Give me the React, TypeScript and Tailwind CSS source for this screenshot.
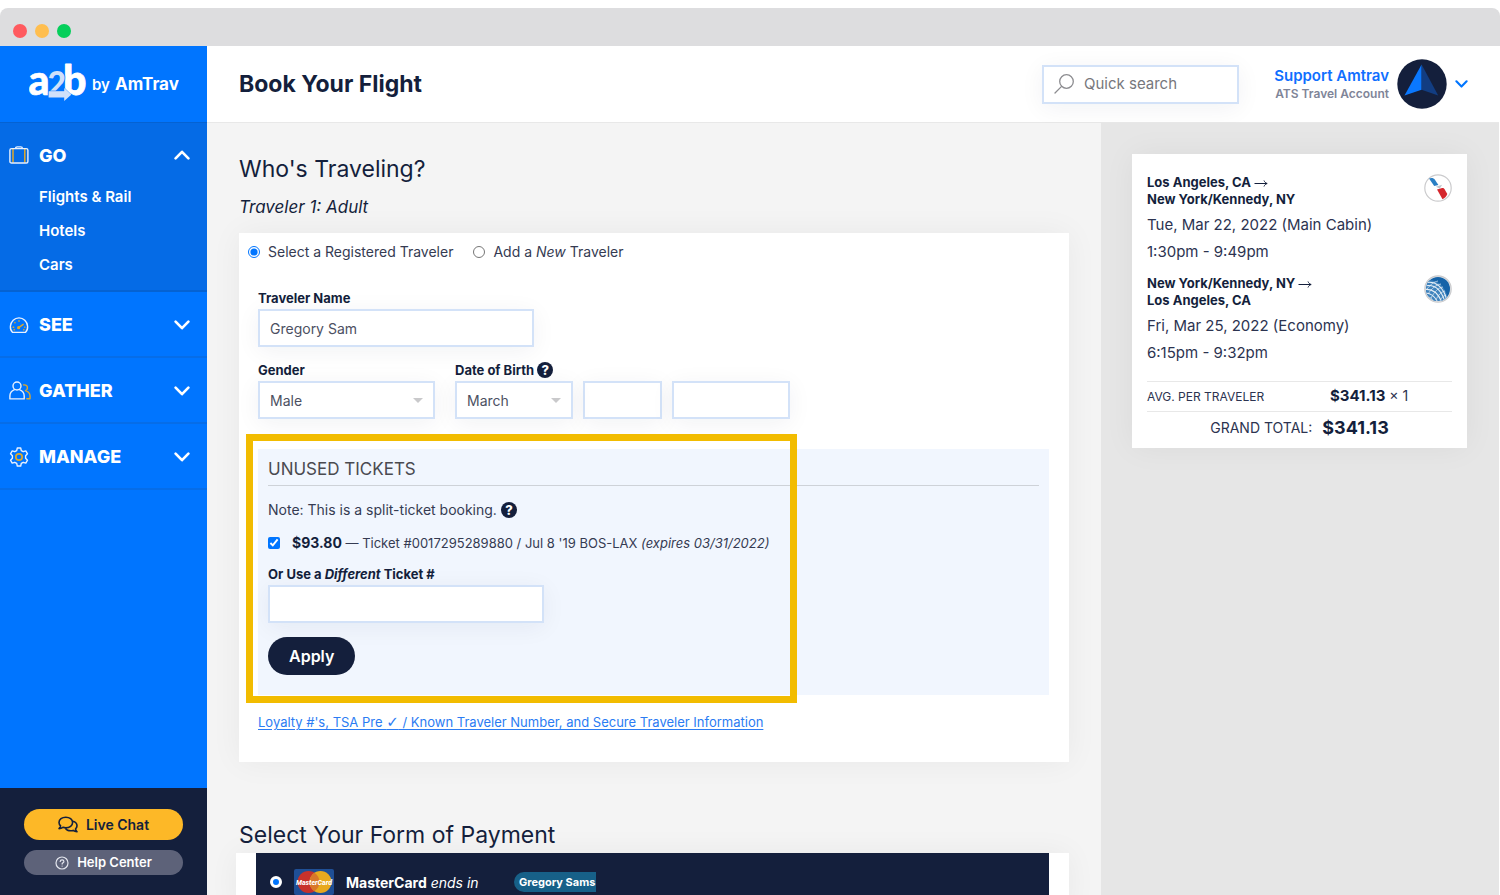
import React from "react";

const fieldClass =
  "h-[38px] w-full border-2 border-[#d3e2f8] bg-white px-[10px] text-[14px] text-[#4c5062] shadow-[0_4px_24px_rgba(20,31,60,0.06)] outline-none focus:border-[#0075ff]";
const labelClass = "text-[13px] leading-5 font-bold text-[#141f3c]";

function Chevron({ up = false, className = "" }: { up?: boolean; className?: string }) {
  return (
    <svg viewBox="0 0 16 10" className={className} fill="none" stroke="currentColor" strokeWidth="2.6" strokeLinecap="round" strokeLinejoin="round" aria-hidden="true">
      <path d={up ? "M1.6 8.4 8 1.8l6.4 6.6" : "M1.6 1.6 8 8.2l6.4-6.6"} />
    </svg>
  );
}

function Brand() {
  return (
    <a href="#home" className="flex h-[76px] items-center pl-[29px] text-white" aria-label="a2b by AmTrav">
      <svg viewBox="0 0 150 60" className="h-[60px] w-[150px]" fill="#fff" aria-hidden="true">
        <g fontFamily="Lato, sans-serif" fontWeight="900" strokeLinejoin="round">
          <text x="-0.500" y="41" fontSize="41" stroke="#fff" strokeWidth="0.600">a</text>
          <text x="34" y="41" fontSize="41" stroke="#fff" strokeWidth="0.800">b</text>
          <text x="18.500" y="41" fontSize="32" fill="#cfe0fa" stroke="#0075ff" strokeWidth="1.400" paintOrder="stroke">2</text>
        </g>
        <path d="M19.600 37.200h15.600v-3.200l7 6.800-7 6.200v-3.600H19.600z" fill="#cfe0fa" stroke="#0075ff" strokeWidth="1" paintOrder="stroke" />
        <g fontFamily="Inter, sans-serif">
          <text x="63" y="36" fontSize="15" fontWeight="600">by</text>
          <text x="86" y="36" fontSize="17" fontWeight="700">AmTrav</text>
        </g>
      </svg>
    </a>
  );
}

const gold = "#e0a92a";

function SuitcaseIcon() {
  return (
    <svg viewBox="0 0 20 18" className="h-[18px] w-5" fill="none" stroke="#e8f1ff" strokeWidth="1.400" aria-hidden="true">
      <path d="M4 3v13.500M15.800 3v13.500" stroke={gold} strokeWidth="1.500" />
      <rect x="0.900" y="2.600" width="18" height="14.400" rx="1.600" />
      <path d="M6.600 2.600c0-1.200.6-1.700 1.600-1.700h3.600c1 0 1.600.5 1.600 1.700" />
    </svg>
  );
}

function GaugeIcon() {
  return (
    <svg viewBox="0 0 20 18" className="h-[18px] w-5" fill="none" stroke="#e8f1ff" strokeWidth="1.400" strokeLinejoin="round" aria-hidden="true">
      <path d="M3.600 16.400C2 14.900 1.200 12.600 1.400 10.200 1.800 5.400 5.600 1.900 10 1.900s8.200 3.500 8.600 8.300c.2 2.400-.6 4.700-2.200 6.200z" />
      <path d="M10 4.200v1.600M5.500 6.300l.9.900M3.600 11.200h1.600M4.600 14l1.200-.5M15.400 14l-1.200-.5M16.400 11.200h-1.200M9.600 11.600l5-3.400" stroke={gold} />
      <circle cx="9.600" cy="11.700" r="1.600" fill={gold} stroke="none" />
    </svg>
  );
}

function PeopleIcon() {
  return (
    <svg viewBox="0 0 22 19" className="h-[19px] w-[22px]" fill="none" stroke="#e8f1ff" strokeWidth="1.400" strokeLinecap="round" strokeLinejoin="round" aria-hidden="true">
      <path d="M14.600 3.900c2.400-.4 4 1 3.800 3.200-.1 1.200-.8 2-1.800 2.500 2.600.9 4.200 2.500 4.400 5.200v3h-3.200" stroke={gold} />
      <circle cx="8" cy="5" r="4" />
      <path d="M5.500 8.700C2.600 9.800.9 12 .9 15v2.900h14.300V15c0-3-1.800-5.200-4.700-6.300" />
    </svg>
  );
}

function GearIcon() {
  return (
    <svg viewBox="0 0 20 20" className="h-5 w-5" fill="none" stroke="#e8f1ff" strokeWidth="1.400" strokeLinejoin="round" aria-hidden="true">
      <path d="M8.300 1h3.400l.6 2.600 1.900 1.100 2.600-.8 1.700 2.900-1.900 1.900v2.600l1.900 1.900-1.700 2.900-2.600-.8-1.900 1.100-.6 2.600H8.300l-.6-2.600-1.900-1.100-2.600.8-1.700-2.900 1.900-1.900V8.700L1.500 6.800l1.700-2.900 2.600.8 1.900-1.100z" />
      <circle cx="10" cy="10" r="3.200" stroke={gold} strokeWidth="1.700" />
    </svg>
  );
}

function HelpDot({ label }: { label: string }) {
  return (
    <button type="button" aria-label={label} className="flex h-4 w-4 items-center justify-center rounded-full bg-[#141f3c] text-[13px] leading-4 font-extrabold text-white">
      ?
    </button>
  );
}

function SelectField({ id, value, options }: { id: string; value: string; options: string[] }) {
  return (
    <div className="relative">
      <select id={id} defaultValue={value} className={`${fieldClass} appearance-none`}>
        {options.map((o) => (
          <option key={o}>{o}</option>
        ))}
      </select>
      <svg viewBox="0 0 10 5" className="pointer-events-none absolute top-[17px] right-3 h-[5px] w-[10px]" fill="#c9c9cb" aria-hidden="true">
        <path d="M0 0h10L5 5z" />
      </svg>
    </div>
  );
}

function NavItem({ icon, label }: { icon: React.ReactNode; label: string }) {
  return (
    <button type="button" className="flex h-[66px] w-full items-center border-b-2 border-[#066de8] pt-px pr-[17px] pl-[9px] text-left text-white">
      <span className="flex w-[30px] items-center">{icon}</span>
      <span className="flex-1 text-[18px] font-extrabold">{label}</span>
      <Chevron className="h-[10px] w-4" />
    </button>
  );
}

function Sidebar() {
  return (
    <aside className="flex w-[207px] shrink-0 flex-col bg-[#0075ff]">
      <Brand />
      <nav className="flex-1">
        <div className="h-[170px] border-b-2 border-t border-[#0562d2] bg-[#056be6] pt-[14px] text-white">
          <button type="button" className="flex h-9 w-full items-center pr-[17px] pl-[9px] text-left">
            <span className="w-[30px]"><SuitcaseIcon /></span>
            <span className="flex-1 text-[18px] font-extrabold">GO</span>
            <Chevron up className="h-[10px] w-4" />
          </button>
          <ul className="mt-[14px] flex flex-col gap-[14px] pl-[39px] text-[15px] leading-5 font-semibold">
            <li><a href="#flights">Flights &amp; Rail</a></li>
            <li><a href="#hotels">Hotels</a></li>
            <li><a href="#cars">Cars</a></li>
          </ul>
        </div>
        <NavItem icon={<GaugeIcon />} label="SEE" />
        <NavItem icon={<PeopleIcon />} label="GATHER" />
        <NavItem icon={<GearIcon />} label="MANAGE" />
      </nav>
      <div className="flex h-[107px] flex-col gap-[10px] bg-[#141f3c] px-6 pt-[21px]">
        <button type="button" className="flex h-[31px] items-center justify-center gap-2 rounded-full bg-[#fdb827] text-[14px] font-semibold text-[#141f3c]">
          <svg viewBox="0 0 20 17" className="h-[17px] w-5" fill="none" stroke="currentColor" strokeWidth="1.600" strokeLinejoin="round" aria-hidden="true">
            <path d="M7.800 1.200c3.800 0 6.800 2.300 6.800 5.300s-3 5.300-6.800 5.300c-1 0-2-.2-2.900-.5-1 .8-2.300 1.300-3.900 1.300.8-.8 1.400-1.700 1.600-2.700C1.600 8.900 1 7.800 1 6.500c0-3 3-5.300 6.800-5.300z" />
            <path d="M14.800 5.300c2.500.6 4.200 2.300 4.200 4.500 0 1.200-.6 2.300-1.500 3.200.2 1 .7 1.900 1.500 2.700-1.600 0-2.900-.5-3.900-1.300-.8.3-1.600.4-2.500.4-2.200 0-4.100-.9-5.200-2.600" />
          </svg>
          Live Chat
        </button>
        <button type="button" className="flex h-[25px] items-center justify-center gap-2 rounded-full bg-[#5d6279] text-[13px] font-semibold text-white">
          <svg viewBox="0 0 14 14" className="h-[14px] w-[14px]" fill="none" stroke="#e4e6ee" strokeWidth="1.200" strokeLinecap="round" aria-hidden="true">
            <circle cx="7" cy="7" r="6" />
            <path d="M5.200 5.500c.1-1.100.8-1.700 1.900-1.700s1.800.7 1.800 1.600c0 1.400-1.800 1.300-1.800 2.700M7.100 10v.1" />
          </svg>
          Help Center
        </button>
      </div>
    </aside>
  );
}

function Header() {
  return (
    <header className="flex h-[77px] shrink-0 items-center border-b border-[#e8e8e8] bg-white pr-[31px] pl-8">
      <h1 className="flex-1 text-[23px] font-bold text-[#141f3c]">Book Your Flight</h1>
      <label className="flex h-[39px] w-[197px] items-center gap-[10px] border-2 border-[#d3e2f8] bg-white pl-[10px] shadow-[0_4px_24px_rgba(20,31,60,0.06)]">
        <svg viewBox="0 0 20 20" className="h-5 w-5 shrink-0" fill="none" stroke="#8c8c90" strokeWidth="1.300" strokeLinecap="round" aria-hidden="true">
          <circle cx="12.500" cy="7.500" r="6.800" />
          <path d="M7.600 12.400 1 19" />
        </svg>
        <input type="search" aria-label="Quick search" placeholder="Quick search" className="w-full min-w-0 bg-transparent text-[15px] text-[#141f3c] outline-none placeholder:text-[#77777c]" />
      </label>
      <button type="button" className="ml-8 flex items-center text-right">
        <span className="flex w-[118px] flex-col">
          <span className="text-[15px] leading-5 font-semibold text-[#0f6fff]">Support Amtrav</span>
          <span className="text-[12px] leading-4 font-semibold text-[#7f8598]">ATS Travel Account</span>
        </span>
        <svg viewBox="0 0 50 50" className="ml-2 h-[50px] w-[50px]" aria-hidden="true">
          <circle cx="25" cy="25" r="24.700" fill="#141f3c" />
          <path d="M24.600 5.500v25.200L7.500 36.500z" fill="#0a78ff" />
          <path d="M24.600 5.500v25.200l16.600 5.800z" fill="#123d82" />
        </svg>
        <Chevron className="ml-2 h-2 w-[13px] text-[#0075ff]" />
      </button>
    </header>
  );
}

function UnusedTickets() {
  return (
    <section className="relative mt-[30px] bg-[#f1f6fe] px-[10px] pt-[10px] pb-5 text-[#353b52]">
      <div className="pointer-events-none absolute -top-[15px] -bottom-2 -left-3 w-[551px] border-[7px] border-[#f2bc00]" />
      <h3 className="border-b border-[#ced2d8] pb-[6px] text-[17px] leading-5 text-[#4a4a50]">UNUSED TICKETS</h3>
      <p className="mt-[14px] flex items-center gap-1 text-[14px] leading-5">
        Note: This is a split-ticket booking.
        <HelpDot label="About split-ticket bookings" />
      </p>
      <label className="mt-[13px] flex items-center gap-3 text-[13px] leading-5">
        <input type="checkbox" defaultChecked className="h-3 w-3 accent-[#0075ff]" />
        <span>
          <b className="text-[14px] text-[#141f3c]">$93.80</b> — Ticket #0017295289880 / Jul 8 '19 BOS-LAX <i>(expires 03/31/2022)</i>
        </span>
      </label>
      <label htmlFor="ticket" className={`${labelClass} mt-[11px] block`}>
        Or Use a <i>Different</i> Ticket #
      </label>
      <div className="mt-px w-[276px]">
        <input id="ticket" type="text" className={fieldClass} />
      </div>
      <button type="button" className="mt-[14px] h-[38px] rounded-full bg-[#141f3c] px-[21px] text-[16px] font-semibold text-white">
        Apply
      </button>
    </section>
  );
}

function TravelerForm() {
  return (
    <form className="bg-white pt-[9px] pr-5 pb-[30px] pl-[19px] shadow-[0_0_30px_rgba(0,0,0,0.05)]">
      <div className="-ml-[10px] flex gap-5 text-[14px] leading-5 text-[#353b52]">
        <label className="flex items-center gap-2">
          <input type="radio" name="traveler" defaultChecked className="h-3 w-3 accent-[#0075ff]" />
          Select a Registered Traveler
        </label>
        <label className="flex items-center gap-2">
          <input type="radio" name="traveler" className="h-3 w-3 accent-[#0075ff]" />
          <span>Add a <i>New</i> Traveler</span>
        </label>
      </div>
      <div className="mt-[26px] w-[276px]">
        <label htmlFor="name" className={`${labelClass} block pb-px`}>Traveler Name</label>
        <input id="name" type="text" defaultValue="Gregory Sam" className={fieldClass} />
      </div>
      <div className="mt-[13px] flex gap-5">
        <div className="w-[177px]">
          <label htmlFor="gender" className={`${labelClass} block pb-px`}>Gender</label>
          <SelectField id="gender" value="Male" options={["Male", "Female"]} />
        </div>
        <div>
          <div className="flex items-center gap-[3px] pb-px">
            <label htmlFor="month" className={labelClass}>Date of Birth</label>
            <HelpDot label="About date of birth" />
          </div>
          <div className="flex gap-[10px]">
            <div className="w-[118px]">
              <SelectField id="month" value="March" options={["January", "February", "March", "April"]} />
            </div>
            <div className="w-[79px]"><input type="text" aria-label="Day" className={fieldClass} /></div>
            <div className="w-[118px]"><input type="text" aria-label="Year" className={fieldClass} /></div>
          </div>
        </div>
      </div>
      <UnusedTickets />
      <p className="mt-[17px] text-[13px] leading-5">
        <a href="#loyalty" className="text-[#2b7cf3] underline underline-offset-2">
          Loyalty #'s, TSA Pre <span className="font-['DejaVu_Sans'] text-[15px] font-bold">✓</span> / Known Traveler Number, and Secure Traveler Information
        </a>
      </p>
    </form>
  );
}

function Payment() {
  return (
    <div className="-ml-[3px] bg-white px-5 shadow-[0_0_30px_rgba(0,0,0,0.05)]">
      <label className="flex h-[58px] items-center bg-[#141f3c] pl-[14px] text-[14px] text-white">
        <input type="radio" name="payment" defaultChecked className="h-3 w-3 appearance-none rounded-full border-[3px] border-white bg-[#0075ff]" />
        <svg viewBox="0 0 40 26" className="ml-3 h-[26px] w-10" aria-hidden="true">
          <rect width="40" height="26" rx="2" fill="#1f4f96" />
          <circle cx="14.500" cy="13" r="11" fill="#c8322b" />
          <circle cx="26.500" cy="13" r="11" fill="#e8a91e" />
          <path d="M20.500 3.800a11 11 0 0 1 0 18.400 11 11 0 0 1 0-18.400z" fill="#d9772a" />
          <text x="20" y="15.500" fontSize="7" fontWeight="800" fontStyle="italic" textAnchor="middle" fill="#fff" fontFamily="Roboto, sans-serif">MasterCard</text>
        </svg>
        <span className="ml-3 w-[168px]"><b>MasterCard</b> <i>ends in</i></span>
        <span className="h-5 w-[82px] overflow-hidden rounded-l-full bg-[#176088] pl-[5px] text-[11px] leading-5 font-bold whitespace-nowrap">Gregory Sams</span>
      </label>
    </div>
  );
}

function AmericanLogo() {
  return (
    <svg viewBox="0 0 28 28" className="h-7 w-7" aria-hidden="true">
      <circle cx="14" cy="14" r="13.200" fill="#fff" stroke="#cbcbcd" strokeWidth="1.200" />
      <path d="M5 4.500c2-1 4.200-.8 5.400.6l4 5.900-4.200.9z" fill="#2a7fc4" />
      <path d="M11.800 12.800l6.400-2-2.400 3.700z" fill="#bfc6cd" />
      <path d="M13 15.500l4.400-1.300c1.600-.4 2.500 0 3.200 1.100l2.700 4.600c-.9 2.400-2.600 4.200-4.800 5.300z" fill="#d5262c" />
    </svg>
  );
}

function UnitedLogo() {
  return (
    <svg viewBox="0 0 28 28" className="h-7 w-7" aria-hidden="true">
      <defs>
        <clipPath id="globe"><circle cx="14" cy="14" r="12" /></clipPath>
      </defs>
      <circle cx="14" cy="14" r="13.200" fill="#dfe5ea" stroke="#cbcbcd" strokeWidth="1.200" />
      <g clipPath="url(#globe)">
        <rect width="28" height="28" fill="#1663a8" />
        <path d="M0 6C12 3 22 10 25 28H0z" fill="#3f83bd" />
        <g fill="none" stroke="#e6eff7" strokeWidth="1.100">
          <path d="M1 8c10-3 19 4 22 18M1 11c9-2 16 3 20 16M1 14.500c8-1 13 3 17 13M1 18c6 0 10 3 13 10M1 21.500c4 0 7 2 9 6" />
          <path d="M3 14C7 9 10 7 14 6M4 19c4-6 8-9 13-10M7 23c4-7 7-10 12-11M12 25c2-5 5-8 9-9M16 26c1-3 3-5 6-6" strokeWidth="0.700" />
        </g>
      </g>
    </svg>
  );
}

function Leg({ from, to, date, time, logo }: { from: string; to: string; date: string; time: string; logo: React.ReactNode }) {
  return (
    <section className="flex items-start justify-between text-[#2c3350]">
      <div>
        <h2 className="text-[13px] leading-[17px] font-bold text-[#141f3c]">
          {from}{" "}
          <svg viewBox="0 0 14 8" className="inline h-2 w-[14px]" fill="none" stroke="currentColor" strokeWidth="1" role="img" aria-label="to">
            <path d="M0.500 4.500h12.500M10 1.500c.6 1.500 1.600 2.500 3.200 3-1.600.5-2.600 1.500-3.200 3" />
          </svg>
          <br />{to}
        </h2>
        <p className="mt-[3px] text-[15px] leading-[27px]">{date}<br />{time}</p>
      </div>
      {logo}
    </section>
  );
}

function Summary() {
  return (
    <aside className="w-[398px] shrink-0 bg-[#e6e6e6] pt-[31px] pr-8 pl-[31px]">
      <div className="flex flex-col gap-[10px] bg-white px-[15px] pt-5 pb-[6px] shadow-[0_0_30px_rgba(0,0,0,0.05)]">
        <Leg from="Los Angeles, CA" to="New York/Kennedy, NY" date="Tue, Mar 22, 2022 (Main Cabin)" time="1:30pm - 9:49pm" logo={<AmericanLogo />} />
        <Leg from="New York/Kennedy, NY" to="Los Angeles, CA" date="Fri, Mar 25, 2022 (Economy)" time="6:15pm - 9:32pm" logo={<UnitedLogo />} />
        <dl className="mt-[5px] text-[#2c3350]">
          <div className="flex h-[31px] items-center border-y border-[#e8e8e8]">
            <dt className="w-3/5 text-[12px]">AVG. PER TRAVELER</dt>
            <dd className="text-[14px]"><b className="text-[15px] text-[#141f3c]">$341.13</b> × 1</dd>
          </div>
          <div className="flex h-[30px] items-center justify-center gap-[10px]">
            <dt className="text-[14px]">GRAND TOTAL:</dt>
            <dd className="text-[18px] font-bold text-[#141f3c]">$341.13</dd>
          </div>
        </dl>
      </div>
    </aside>
  );
}

export default function App() {
  return (
    <div className="flex h-screen flex-col overflow-hidden bg-white pt-2 font-['Inter',sans-serif] text-[#141f3c]">
      <div className="flex h-[38px] shrink-0 items-center gap-2 rounded-t-lg bg-[#dddddf] pt-[7px] pl-[13px]">
        <span className="h-[14px] w-[14px] rounded-full bg-[#ff5a5f]" />
        <span className="h-[14px] w-[14px] rounded-full bg-[#ffbe4f]" />
        <span className="h-[14px] w-[14px] rounded-full bg-[#05cf5b]" />
      </div>
      <div className="flex min-h-0 flex-1 pr-px">
        <Sidebar />
        <div className="flex min-w-0 flex-1 flex-col">
          <Header />
          <div className="flex min-h-0 flex-1">
            <main className="min-w-0 flex-1 overflow-hidden bg-[#f4f4f4] px-8 pt-[30px]">
              <h2 className="text-[23px] leading-8">Who's Traveling?</h2>
              <p className="mt-3 mb-4 text-[17px] leading-5 italic">Traveler 1: Adult</p>
              <TravelerForm />
              <h2 className="mt-[57px] mb-[2px] text-[23px] leading-8">Select Your Form of Payment</h2>
              <Payment />
            </main>
            <Summary />
          </div>
        </div>
      </div>
    </div>
  );
}
